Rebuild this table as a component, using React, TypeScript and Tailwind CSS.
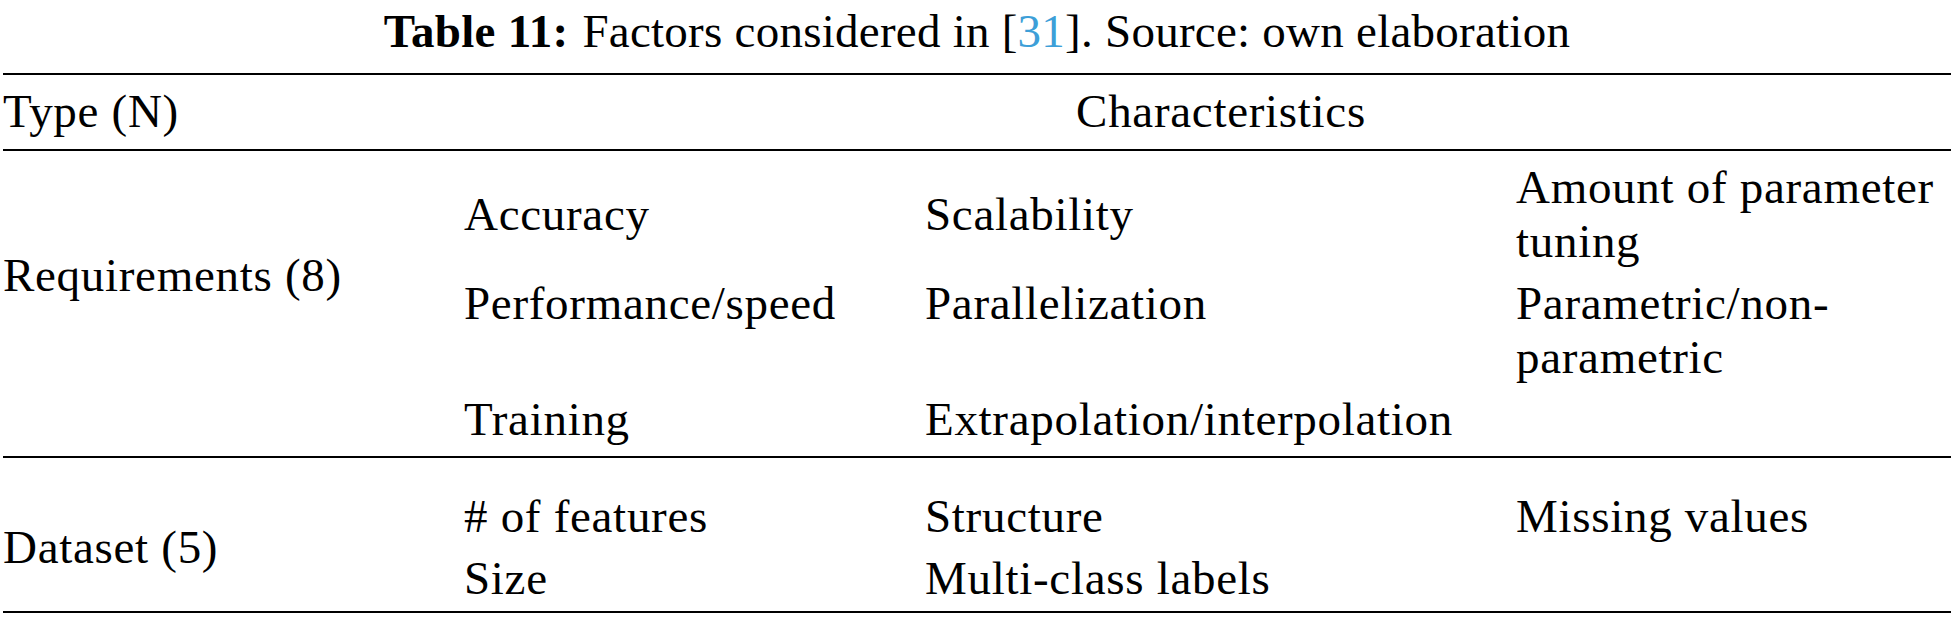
import React from 'react';

const cols = 'grid grid-cols-[461px_461px_591px_1fr]';

function Rule() {
  return <div className="h-[2px] w-full bg-black" />;
}

export default function App() {
  return (
    <div className="w-[1954px] h-[617px] overflow-hidden bg-white text-black px-[3px] font-['Liberation_Serif','Times_New_Roman',Times,serif] text-[47px] leading-[54px] tracking-[0.7px]">
      {/* caption */}
      <div className="pt-[4px] text-center whitespace-nowrap tracking-[0.25px]">
        <span className="font-bold">Table 11:</span>
        <span className="inline-block w-[14px]" />
        Factors considered in [<span className="text-[#3d9fd8]">31</span>]. Source: own elaboration
      </div>

      <div className="mt-[15px]">
        <Rule />
      </div>

      {/* header */}
      <div className={`${cols} pt-[9px] pb-[11px]`}>
        <div>Type (N)</div>
        <div className="col-span-3 text-center pl-[27px]">Characteristics</div>
      </div>
      <Rule />

      {/* requirements */}
      <div className={`${cols} gap-y-[8px] pt-[9px] pb-[10px]`}>
        <div className="row-start-1 row-span-2 self-center pt-[5px]">Requirements (8)</div>

        <div className="row-start-1 col-start-2 self-center">Accuracy</div>
        <div className="row-start-1 col-start-3 self-center">Scalability</div>
        <div className="row-start-1 col-start-4">Amount of parameter tuning</div>

        <div className="row-start-2 col-start-2">Performance/speed</div>
        <div className="row-start-2 col-start-3">Parallelization</div>
        <div className="row-start-2 col-start-4">Parametric/non-parametric</div>

        <div className="row-start-3 col-start-2">Training</div>
        <div className="row-start-3 col-start-3">Extrapolation/interpolation</div>
      </div>
      <Rule />

      {/* dataset */}
      <div className={`${cols} gap-y-[8px] pt-[31px] pb-[6px]`}>
        <div className="row-start-1 row-span-2 self-center">Dataset (5)</div>

        <div className="row-start-1 col-start-2"># of features</div>
        <div className="row-start-1 col-start-3">Structure</div>
        <div className="row-start-1 col-start-4">Missing values</div>

        <div className="row-start-2 col-start-2">Size</div>
        <div className="row-start-2 col-start-3">Multi-class labels</div>
      </div>
      <Rule />
    </div>
  );
}
